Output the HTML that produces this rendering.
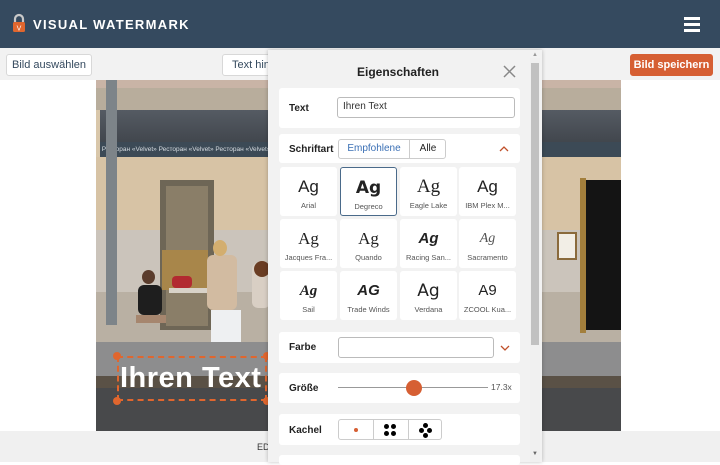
<!DOCTYPE html>
<html><head><meta charset="utf-8">
<style>
*{box-sizing:border-box;margin:0;padding:0}
body{width:720px;height:462px;overflow:hidden;font-family:"Liberation Sans",sans-serif;background:#fff;position:relative;color:#222}
.abs{position:absolute}
.hdr{left:0;top:0;width:720px;height:48px;background:#354a5f}
.logo{left:33px;top:17px;color:#fff;font-weight:bold;font-size:13px;letter-spacing:1.3px;white-space:nowrap}
.tb{left:0;top:48px;width:720px;height:32px;background:#f2f2f2}
.btn{background:#fff;border:1px solid #d8d8d8;border-radius:3px;font-size:11px;color:#34495e;height:22px;line-height:20px;text-align:center;white-space:nowrap;overflow:hidden}
.photo{left:96px;top:80px;width:525px;height:351px;overflow:hidden;background:#d9c7aa}
.bottom{left:0;top:431px;width:720px;height:31px;background:#f0f0f0}
.panel{left:268px;top:50px;width:274px;height:412px;background:#f2f2f2;box-shadow:0 0 4px rgba(0,0,0,.25)}
.card{position:absolute;left:11px;width:241px;background:#fff;border-radius:3px}
.lbl{position:absolute;left:10px;font-size:10px;font-weight:bold;color:#222}
.tile{position:absolute;width:57px;height:49px;background:#fff;border-radius:3px;text-align:center}
.tile .ag{font-size:17px;margin-top:9px;height:22px;line-height:22px;color:#222}
.tile .n{font-size:7.5px;color:#555;margin-top:3px;white-space:nowrap}
.dot{position:absolute;width:5px;height:5px;border-radius:50%;background:#000}
</style></head><body>
<div class="abs hdr"></div>
<svg class="abs" style="left:10px;top:13px" width="18" height="20" viewBox="0 0 18 20"><path d="M5 9V6a4 4 0 0 1 8 0v3" stroke="#c9c9c9" stroke-width="2.2" fill="none"/><rect x="3" y="9" width="12" height="10" rx="1.5" fill="#e0662e"/><text x="9" y="17.5" font-size="7" fill="#fff" text-anchor="middle" font-family="Liberation Sans">V</text></svg>
<div class="abs logo">VISUAL WATERMARK</div>
<div class="abs" style="left:684px;top:17px;width:16px;height:3px;background:#fff;box-shadow:0 6px 0 #fff,0 12px 0 #fff"></div>
<div class="abs tb"></div>
<div class="abs btn" style="left:6px;top:54px;width:86px">Bild auswählen</div>
<div class="abs btn" style="left:222px;top:54px;width:60px;text-align:left;padding-left:9px">Text hinzufügen</div>
<div class="abs btn" style="left:630px;top:54px;width:83px;background:#d65f33;border-color:#d65f33;color:#fff;font-weight:bold">Bild speichern</div>

<div class="abs photo">
 <div class="abs" style="left:0;top:0;width:525px;height:8px;background:#c9b4a6"></div>
 <div class="abs" style="left:0;top:8px;width:525px;height:22px;background:#b8ad9c"></div>
 <div class="abs" style="left:4px;top:30px;width:521px;height:33px;background:linear-gradient(#555b63,#41464d)"></div>
 <div class="abs" style="left:4px;top:62px;width:521px;height:15px;background:#3c4a56;color:#d5dbe0;font-size:6.5px;line-height:15px;white-space:nowrap;overflow:hidden">&nbsp;Ресторан «Velvet» Ресторан «Velvet» Ресторан «Velvet» Ресторан «Velvet» Ресторан «Velvet» Ресторан «Velvet» Ресторан «Velvet»</div>
 <div class="abs" style="left:0;top:77px;width:525px;height:73px;background:#d7c3a5"></div>
 <div class="abs" style="left:0;top:150px;width:525px;height:62px;background:#cbc4bb"></div>
 <div class="abs" style="left:0;top:212px;width:525px;height:50px;background:#b9b0a3"></div>
 <div class="abs" style="left:10px;top:0;width:11px;height:245px;background:#7d8489"></div>
 <div class="abs" style="left:64px;top:100px;width:54px;height:150px;background:#6e6656"></div>
 <div class="abs" style="left:70px;top:106px;width:42px;height:140px;background:#8a7e68"></div>
 <div class="abs" style="left:66px;top:170px;width:46px;height:40px;background:#a8864a"></div>
 <div class="abs" style="left:490px;top:100px;width:35px;height:150px;background:#141414"></div>
 <div class="abs" style="left:484px;top:98px;width:6px;height:155px;background:#a37f3c"></div>
 <div class="abs" style="left:461px;top:152px;width:20px;height:28px;background:#f2eee6;border:2px solid #8a6a3c"></div>
 <div class="abs" style="left:42px;top:205px;width:24px;height:30px;background:#1e1e1e;border-radius:6px"></div>
 <div class="abs" style="left:46px;top:190px;width:13px;height:14px;background:#5a3c2c;border-radius:50%"></div>
 <div class="abs" style="left:40px;top:235px;width:30px;height:8px;background:#a6866e"></div>
 <div class="abs" style="left:76px;top:196px;width:20px;height:12px;background:#b22a30;border-radius:4px"></div>
 <div class="abs" style="left:73px;top:208px;width:42px;height:5px;background:#d8d2c8"></div>
 <div class="abs" style="left:111px;top:175px;width:30px;height:55px;background:#d2bba1;border-radius:6px"></div>
 <div class="abs" style="left:117px;top:160px;width:14px;height:16px;background:#d3ae6f;border-radius:50%"></div>
 <div class="abs" style="left:115px;top:230px;width:30px;height:45px;background:#eef0f2"></div>
 <div class="abs" style="left:156px;top:183px;width:18px;height:45px;background:#d9cfc4;border-radius:6px"></div>
 <div class="abs" style="left:158px;top:181px;width:16px;height:16px;background:#6a3d23;border-radius:50%"></div>
 <div class="abs" style="left:0;top:262px;width:525px;height:34px;background:#8d8d8e"></div>
 <div class="abs" style="left:0;top:296px;width:525px;height:12px;background:#5a5146"></div>
 <div class="abs" style="left:0;top:308px;width:525px;height:43px;background:#48494b"></div>
 <div class="abs" style="left:21px;top:276px;width:150px;height:45px;border:2px dashed #e0662e"></div>
 <div class="abs" style="left:17px;top:272px;width:8px;height:8px;border-radius:50%;background:#e0662e"></div>
 <div class="abs" style="left:17px;top:317px;width:8px;height:8px;border-radius:50%;background:#e0662e"></div>
 <div class="abs" style="left:167px;top:272px;width:8px;height:8px;border-radius:50%;background:#e0662e"></div>
 <div class="abs" style="left:167px;top:317px;width:8px;height:8px;border-radius:50%;background:#e0662e"></div>
 <div class="abs" style="left:24px;top:282px;color:#fff;font-weight:bold;font-size:29px;letter-spacing:0.5px;white-space:nowrap">Ihren Text</div>
</div>
<div class="abs bottom"></div>
<div class="abs" style="left:257px;top:442px;font-size:9px;color:#333">ED</div>

<div class="abs panel">
 <div class="abs" style="left:0;top:15px;width:260px;text-align:center;font-weight:bold;font-size:12px">Eigenschaften</div>
 <svg class="abs" style="left:235px;top:15px" width="13" height="13"><path d="M1 1L12 12M12 1L1 12" stroke="#888" stroke-width="1.5"/></svg>
 <div class="abs" style="left:262px;top:8px;width:10px;height:404px;background:#f0f0f0"></div>
 <div class="abs" style="left:263px;top:13px;width:8px;height:282px;background:#c1c1c1"></div>
 <div class="abs" style="left:264px;top:2px;font-size:6px;color:#999">▲</div>
 <div class="abs" style="left:264px;top:401px;font-size:6px;color:#666">▼</div>

 <div class="card" style="top:38px;height:40px"><div class="lbl" style="top:15px">Text</div>
  <div class="abs" style="left:58px;top:9px;width:178px;height:21px;border:1px solid #bbb;border-radius:3px;font-size:10px;padding:3px 5px;color:#333">Ihren Text</div></div>
 <div class="card" style="top:84px;height:29px"><div class="lbl" style="top:10px">Schriftart</div>
  <div class="abs" style="left:59px;top:5px;width:108px;height:20px;border:1px solid #ccc;border-radius:3px;font-size:10px;line-height:18px">
   <span class="abs" style="left:0;width:70px;text-align:center;color:#3a6fb5">Empfohlene</span>
   <span class="abs" style="left:70px;width:1px;height:18px;background:#ccc"></span>
   <span class="abs" style="left:71px;width:36px;text-align:center">Alle</span></div>
  <svg class="abs" style="left:220px;top:12px" width="10" height="6"><path d="M1 5L5 1L9 5" stroke="#c0502a" stroke-width="1.3" fill="none"/></svg></div>

 <div class="tile" style="left:12px;top:117px"><div class="ag">Ag</div><div class="n">Arial</div></div>
 <div class="tile" style="left:72px;top:117px;border:1px solid #4a6a8a"><div class="ag" style="font-weight:bold;font-family:'DejaVu Sans'">Ag</div><div class="n">Degreco</div></div>
 <div class="tile" style="left:132px;top:117px"><div class="ag" style="font-family:'Liberation Serif';font-size:19px">Ag</div><div class="n">Eagle Lake</div></div>
 <div class="tile" style="left:191px;top:117px"><div class="ag">Ag</div><div class="n">IBM Plex M...</div></div>
 <div class="tile" style="left:12px;top:169px"><div class="ag" style="font-family:'Liberation Serif'">Ag</div><div class="n">Jacques Fra...</div></div>
 <div class="tile" style="left:72px;top:169px"><div class="ag" style="font-family:'Liberation Serif'">Ag</div><div class="n">Quando</div></div>
 <div class="tile" style="left:132px;top:169px"><div class="ag" style="font-weight:bold;font-style:italic;font-size:15px">Ag</div><div class="n">Racing San...</div></div>
 <div class="tile" style="left:191px;top:169px"><div class="ag" style="font-family:'Liberation Serif';font-style:italic;font-size:14px;color:#555">Ag</div><div class="n">Sacramento</div></div>
 <div class="tile" style="left:12px;top:221px"><div class="ag" style="font-family:'Liberation Serif';font-style:italic;font-weight:bold;font-size:15px">Ag</div><div class="n">Sail</div></div>
 <div class="tile" style="left:72px;top:221px"><div class="ag" style="font-weight:bold;font-style:italic;font-size:15px">AG</div><div class="n">Trade Winds</div></div>
 <div class="tile" style="left:132px;top:221px"><div class="ag" style="font-family:'DejaVu Sans'">Ag</div><div class="n">Verdana</div></div>
 <div class="tile" style="left:191px;top:221px"><div class="ag" style="font-size:15px">A9</div><div class="n">ZCOOL Kua...</div></div>

 <div class="card" style="top:282px;height:31px"><div class="lbl" style="top:10px">Farbe</div>
  <div class="abs" style="left:59px;top:5px;width:156px;height:21px;border:1px solid #bbb;border-radius:3px"></div>
  <svg class="abs" style="left:221px;top:13px" width="10" height="6"><path d="M1 1L5 5L9 1" stroke="#c0502a" stroke-width="1.3" fill="none"/></svg></div>
 <div class="card" style="top:323px;height:30px"><div class="lbl" style="top:10px">Größe</div>
  <div class="abs" style="left:59px;top:14px;width:150px;height:1px;background:#999"></div>
  <div class="abs" style="left:127px;top:7px;width:16px;height:16px;border-radius:50%;background:#d65f33"></div>
  <div class="abs" style="left:212px;top:9px;font-size:8.5px;color:#555">17.3x</div></div>
 <div class="card" style="top:364px;height:31px"><div class="lbl" style="top:11px">Kachel</div>
  <div class="abs" style="left:59px;top:5px;width:104px;height:21px;border:1px solid #ccc;border-radius:3px">
   <div class="abs" style="left:34px;top:0;width:1px;height:19px;background:#ccc"></div>
   <div class="abs" style="left:69px;top:0;width:1px;height:19px;background:#ccc"></div>
   <div class="abs" style="left:15px;top:8px;width:4px;height:4px;border-radius:50%;background:#d65f33"></div>
   <div class="dot" style="left:45px;top:4px"></div><div class="dot" style="left:52px;top:4px"></div>
   <div class="dot" style="left:45px;top:11px"></div><div class="dot" style="left:52px;top:11px"></div>
   <div class="dot" style="left:84px;top:3px"></div><div class="dot" style="left:80px;top:8px"></div>
   <div class="dot" style="left:88px;top:8px"></div><div class="dot" style="left:84px;top:13px"></div>
  </div></div>
 <div class="card" style="top:405px;height:10px"></div>
</div>
</body></html>
